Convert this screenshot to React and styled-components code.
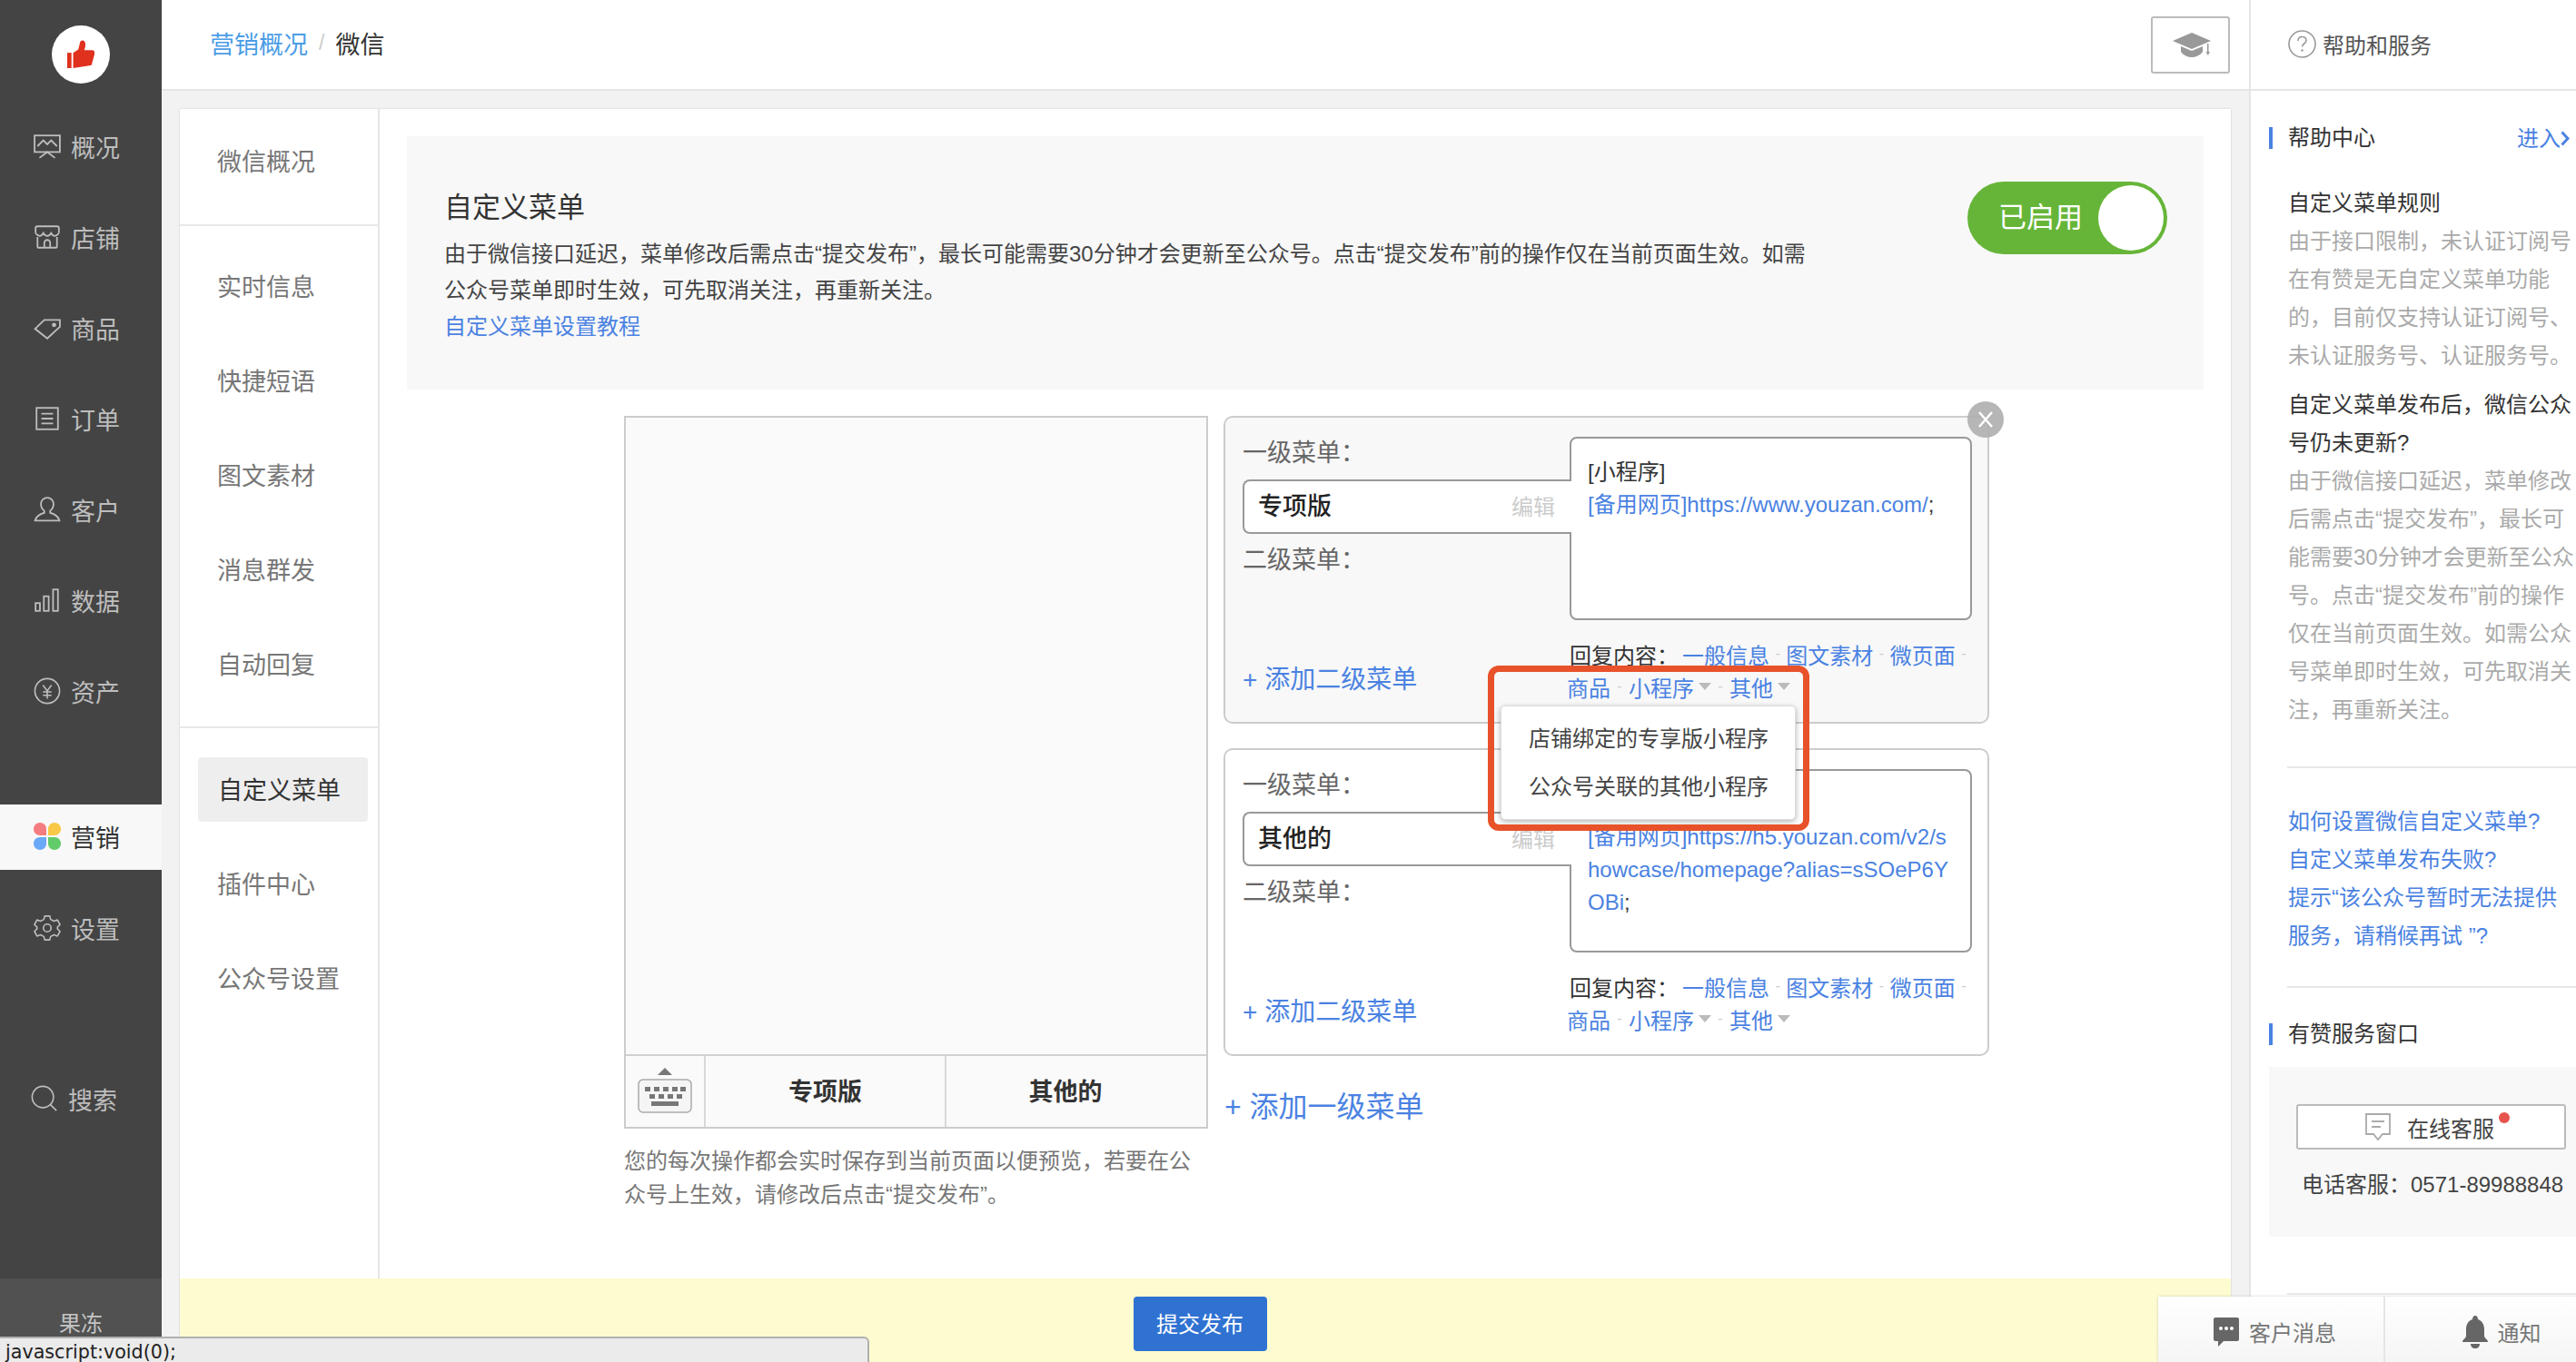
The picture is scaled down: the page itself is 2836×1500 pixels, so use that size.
import styled, { createGlobalStyle } from "styled-components";

const GlobalStyle = createGlobalStyle`
  html, body {
    margin: 0;
    padding: 0;
    background: #f2f2f2;
    overflow: hidden;
  }
  body, button {
    font-family: "Liberation Sans", "Noto Sans CJK SC", sans-serif;
    font-size: 24px;
    color: #333;
  }
`;

const BLUE = "#4a82e2";

const Page = styled.div`
  position: relative;
  display: flex;
  width: 2836px;
  height: 1500px;
  overflow: hidden;
`;

/* left dark column */
const Sidebar = styled.nav`
  flex: 0 0 178px;
  display: flex;
  flex-direction: column;
  background: #444;
`;

const LogoWrap = styled.div`
  height: 111px;
  display: flex;
  justify-content: center;
  padding-top: 28px;
  box-sizing: border-box;
`;

const Logo = styled.div`
  width: 64px;
  height: 64px;
  border-radius: 50%;
  background: #fff;
  display: flex;
  align-items: center;
  justify-content: center;
`;

const NavItem = styled.a`
  height: ${(p) => (p.$active ? "72px" : "100px")};
  margin: ${(p) => (p.$active ? "75px 0 14px" : "0")};
  margin-top: ${(p) => p.$top};
  padding-bottom: ${(p) => (p.$active ? "2px" : "0")};
  box-sizing: border-box;
  display: flex;
  align-items: center;
  gap: 11px;
  padding-left: ${(p) => p.$left || "37px"};
  font-size: 27px;
  color: ${(p) => (p.$active ? "#333" : "#bdbdbd")};
  background: ${(p) => (p.$active ? "#f8f8f8" : "transparent")};
`;

const NavIcon = styled.svg`
  width: 30px;
  height: 30px;
  flex: none;
  fill: none;
  stroke: #bdbdbd;
  stroke-width: 1.7;
`;

const SideFoot = styled.div`
  margin-top: auto;
  height: 92px;
  box-sizing: border-box;
  padding-top: 38px;
  background: #515151;
  color: #c4c4c4;
  text-align: center;
  line-height: 24px;
`;

/* middle column */
const Center = styled.div`
  flex: 1;
  min-width: 0;
  display: flex;
  flex-direction: column;
`;

const TopBar = styled.header`
  height: 100px;
  flex: none;
  box-sizing: border-box;
  border-bottom: 2px solid #e5e5e5;
  background: #fff;
  display: flex;
  align-items: center;
  justify-content: space-between;
  padding: 0 21px 0 53px;
`;

const Crumbs = styled.div`
  display: flex;
  align-items: center;
  padding-bottom: 4px;
  font-size: 27px;
`;

const CrumbLink = styled.a`
  color: #4a9de6;
`;

const CrumbSep = styled.span`
  color: #ccc;
  font-size: 23px;
  margin: 0 12px;
`;

const CapButton = styled.button`
  width: 87px;
  height: 63px;
  padding: 0 0 0 4px;
  background: #fff;
  border: 2px solid #bbb;
  border-radius: 3px;
  display: flex;
  align-items: center;
  justify-content: center;
`;

const Body = styled.div`
  flex: 1;
  min-height: 0;
  padding: 20px 20px 0;
  background: #f2f2f2;
  display: flex;
`;

const Panel = styled.div`
  flex: 1;
  min-width: 0;
  background: #fff;
  box-shadow: 0 0 2px rgba(0, 0, 0, 0.18);
  display: flex;
  flex-direction: column;
`;

const PanelMain = styled.div`
  flex: 1;
  min-height: 0;
  display: flex;
`;

const SubNav = styled.aside`
  flex: 0 0 220px;
  box-sizing: border-box;
  border-right: 2px solid #e5e5e5;
`;

const SubGroup = styled.div`
  padding: ${(p) => p.$pad};
  border-bottom: ${(p) => (p.$last ? "none" : "2px solid #e8e8e8")};
`;

const SubItem = styled.a`
  height: 104px;
  display: flex;
  align-items: center;
  padding: 0 0 3px 41px;
  box-sizing: border-box;
  font-size: 27px;
  color: #777;
`;

const SubActive = styled.a`
  display: flex;
  align-items: center;
  height: 71px;
  margin: 32px 11px 17px 20px;
  padding: 0 0 3px 22px;
  box-sizing: border-box;
  border-radius: 4px;
  background: #eee;
  font-size: 27px;
  color: #333;
`;

const Content = styled.main`
  flex: 1;
  min-width: 0;
  padding: 30px 30px 0;
`;

const Hero = styled.section`
  height: 279px;
  box-sizing: border-box;
  padding: 50px 40px 0 41px;
  background: #f8f8f8;
  display: flex;
  justify-content: space-between;
`;

const HeroTitle = styled.h2`
  margin: 9px 0 11px;
  font-size: 31px;
  font-weight: 400;
  line-height: 40px;
  color: #333;
`;

const HeroText = styled.p`
  margin: 0;
  line-height: 40px;
  white-space: nowrap;
  color: #444;
`;

const BlueLink = styled.a`
  color: ${BLUE};
`;

const Toggle = styled.div`
  width: 220px;
  height: 80px;
  box-sizing: border-box;
  padding: 0 4px 0 34px;
  border-radius: 40px;
  background: #66b538;
  color: #fff;
  font-size: 31px;
  line-height: 76px;
  display: flex;
  align-items: center;
  justify-content: space-between;
`;

const Knob = styled.span`
  width: 72px;
  height: 72px;
  border-radius: 50%;
  background: #fff;
`;

const Editor = styled.div`
  display: flex;
  align-items: flex-start;
  gap: 17px;
  margin: 29px 0 0 239px;
`;

const PhoneCol = styled.div`
  flex: 0 0 643px;
`;

const Phone = styled.div`
  height: 785px;
  box-sizing: border-box;
  border: 2px solid #ccc;
  background: #fafafa;
  display: flex;
  flex-direction: column;
`;

const PhoneScreen = styled.div`
  flex: 1;
`;

const PhoneFooter = styled.div`
  height: 80px;
  flex: none;
  box-sizing: border-box;
  border-top: 2px solid #d0d0d0;
  display: grid;
  grid-template-columns: 86px 265px 1fr;
`;

const PhoneCell = styled.div`
  display: flex;
  align-items: center;
  justify-content: center;
  padding: 0 ${(p) => p.$right || "0"} 3px 0;
  font-size: 27px;
  font-weight: 700;
  color: #333;
  border-left: ${(p) => (p.$first ? "none" : "2px solid #d8d8d8")};
`;

const PhoneNote = styled.p`
  margin: 18px 0 0;
  line-height: 36.5px;
  white-space: nowrap;
  color: #777;
`;

const CardsCol = styled.div`
  flex: 0 0 843px;
  display: flex;
  flex-direction: column;
  gap: 27px;
`;

const Card = styled.div`
  position: relative;
  z-index: ${(p) => (p.$on ? 2 : 1)};
  height: 339px;
  box-sizing: border-box;
  padding: 21px 0 0 19px;
  border: 2px solid #ccc;
  border-radius: 10px;
  background: ${(p) => (p.$on ? "#f8f8f8" : "#fff")};
  display: grid;
  grid-template-columns: 360px 443px;
  align-content: start;
`;

const CloseBadge = styled.span`
  position: absolute;
  top: -18px;
  right: -18px;
  width: 40px;
  height: 40px;
  border-radius: 50%;
  background: rgba(176, 176, 176, 0.92);
  display: flex;
  align-items: center;
  justify-content: center;
`;

const FormCol = styled.div`
  display: flex;
  flex-direction: column;
`;

const FieldLabel = styled.div`
  height: 36px;
  line-height: 36px;
  font-size: 27px;
  color: #666;
  margin-bottom: ${(p) => p.$bottom || "0"};
  margin-top: ${(p) => p.$top || "0"};
`;

const NameInput = styled.div`
  position: relative;
  z-index: 1;
  width: calc(100% + 2px);
  height: 60px;
  box-sizing: border-box;
  padding: 0 18px 5px 15px;
  border: 2px solid #999;
  border-right: none;
  border-radius: 8px 0 0 8px;
  background: #fff;
  display: flex;
  align-items: center;
  justify-content: space-between;
`;

const NameText = styled.span`
  font-size: 27px;
  font-weight: 500;
  color: #222;
`;

const EditText = styled.span`
  padding-top: 2px;
  color: #ccc;
`;

const AddSub = styled.a`
  margin-top: 94px;
  line-height: 40px;
  font-size: 28px;
  color: ${BLUE};
`;

const ReplyCol = styled.div`
  display: flex;
  flex-direction: column;
`;

const ReplyBox = styled.div`
  height: 202px;
  box-sizing: border-box;
  padding: 19px 16px 0 18px;
  border: 2px solid #999;
  border-radius: 8px;
  background: #fff;
  line-height: 36px;
  word-break: break-all;
`;

const ReplyLine = styled.div`
  display: flex;
  align-items: center;
  height: 36px;
  white-space: nowrap;
  margin-left: ${(p) => p.$left || "0"};
  margin-top: ${(p) => p.$top || "0"};
`;

const ReplyLabel = styled.span`
  margin-right: 4px;
`;

const Dash = styled.span`
  width: 20px;
  text-align: center;
  font-size: 16px;
  color: #ccc;
`;

const Caret = styled.i`
  width: 0;
  height: 0;
  margin-left: 5px;
  border-left: 7px solid transparent;
  border-right: 7px solid transparent;
  border-top: 8px solid #bbb;
`;

const Dropdown = styled.div`
  position: absolute;
  z-index: 3;
  top: 317px;
  left: 303px;
  width: 325px;
  height: 126px;
  box-sizing: border-box;
  padding-top: 9px;
  border: 1px solid #ddd;
  border-radius: 5px;
  background: #fff;
  box-shadow: 0 2px 6px rgba(0, 0, 0, 0.3);
`;

const DropItem = styled.div`
  height: 53px;
  line-height: 53px;
  padding-left: 30px;
  white-space: nowrap;
  color: #444;
`;

const RedMark = styled.div`
  position: absolute;
  z-index: 4;
  top: 273px;
  left: 289px;
  width: 354px;
  height: 182px;
  box-sizing: border-box;
  border: 7px solid #e8522a;
  border-radius: 12px;
  pointer-events: none;
`;

const AddTop = styled.a`
  margin-top: 7px;
  margin-left: 1px;
  line-height: 44px;
  font-size: 32px;
  color: ${BLUE};
`;

const SubmitBar = styled.div`
  height: 92px;
  flex: none;
  box-sizing: border-box;
  padding: 20px 12px 0 0;
  background: #fdfbd0;
  display: flex;
  justify-content: center;
`;

const SubmitButton = styled.button`
  width: 147px;
  height: 60px;
  padding: 0 0 3px;
  border: none;
  border-radius: 4px;
  background: #2f72d2;
  color: #fff;
`;

/* right help column */
const Help = styled.aside`
  flex: 0 0 360px;
  box-sizing: border-box;
  border-left: 2px solid #e5e5e5;
  background: #fff;
  overflow: hidden;
`;

const HelpTop = styled.div`
  height: 100px;
  box-sizing: border-box;
  border-bottom: 2px solid #e5e5e5;
  padding: 0 0 2px 41px;
  display: flex;
  align-items: center;
  gap: 7px;
  color: #555;
`;

const SectionHead = styled.div`
  display: flex;
  justify-content: space-between;
  height: 24px;
  line-height: 23px;
  margin: ${(p) => p.$margin};
  padding: 0 7px 0 17px;
  border-left: 4px solid #4a82e2;
`;

const SectionLink = styled.a`
  display: flex;
  align-items: center;
  color: ${BLUE};
`;

const HelpBlock = styled.div`
  padding-left: 41px;
  width: 317px;
  margin-top: ${(p) => p.$top || "0"};
  line-height: 42px;
`;

const HelpTitle = styled.div`
  color: #333;
  margin-top: ${(p) => p.$top || "0"};
`;

const HelpText = styled.div`
  color: #aaa;
`;

const HelpLink = styled.a`
  display: block;
  color: ${BLUE};
`;

const HelpRule = styled.div`
  height: 2px;
  margin: ${(p) => p.$margin};
  margin-left: 40px;
  background: #e8e8e8;
`;

const ServiceBox = styled.div`
  height: 187px;
  box-sizing: border-box;
  margin: 24px 0 0 20px;
  padding: 41px 0 0 30px;
  background: #f8f8f8;
`;

const ServiceButton = styled.div`
  width: 297px;
  height: 50px;
  box-sizing: border-box;
  padding-left: 73px;
  border: 2px solid #bbb;
  border-radius: 3px;
  background: #fff;
  display: flex;
  align-items: center;
  gap: 17px;
`;

const ServiceLabel = styled.span`
  position: relative;
  color: #444;
`;

const RedDot = styled.i`
  position: absolute;
  top: 1px;
  right: -17px;
  width: 12px;
  height: 12px;
  border-radius: 50%;
  background: #e8534e;
`;

const PhoneLine = styled.div`
  margin: 23px 0 0 6px;
  line-height: 32px;
  white-space: nowrap;
  color: #444;
`;

/* things that float over the page */
const BottomTabs = styled.div`
  position: absolute;
  z-index: 6;
  right: 0;
  bottom: 0;
  width: 460px;
  height: 72px;
  background: linear-gradient(#fff, #f5f5f5);
  box-shadow: 0 0 3px rgba(0, 0, 0, 0.18);
  display: grid;
  grid-template-columns: 250px 1fr;
`;

const BottomTab = styled.div`
  display: flex;
  align-items: center;
  justify-content: center;
  gap: 11px;
  padding: 5px 0 0 ${(p) => p.$shift};
  box-sizing: border-box;
  color: #777;
  border-right: ${(p) => (p.$divider ? "2px solid #e5e5e5" : "none")};
`;

const StatusBar = styled.div`
  position: absolute;
  z-index: 7;
  left: 0;
  bottom: 0;
  width: 957px;
  height: 28px;
  box-sizing: border-box;
  padding-left: 6px;
  border-top: 2px solid #b0b0b0;
  border-right: 2px solid #b0b0b0;
  border-top-right-radius: 6px;
  background: #ebebeb;
  font-family: "DejaVu Sans", sans-serif;
  font-size: 20.7px;
  line-height: 30px;
  color: #222;
`;

const ThumbLogo = () => (
  <svg width="30" height="34" viewBox="0 0 32 34" fill="#e0301e">
    <rect x="0" y="15" width="5" height="18" />
    <path d="M7 15 13 11 15 3C15 0 20-1 21 3 22 6 21 9 20 12H29C32 12 33 15 32 17L29 28C29 30 27 30 26 30L7 33Z" />
  </svg>
);

const OverviewIcon = () => (
  <NavIcon viewBox="0 0 28 28">
    <rect x="1" y="3" width="26" height="17" />
    <path d="M4 14 10 8 14 12 18 8 24 14M6 26 14 20 22 26" />
  </NavIcon>
);

const ShopIcon = () => (
  <NavIcon viewBox="0 0 28 28">
    <path d="M2 10V5a2 2 0 0 1 2-2h20a2 2 0 0 1 2 2v5" />
    <path d="M2 10c3 4 6 4 8 0 2 4 6 4 8 0 2 4 5 4 8 0" />
    <path d="M4 14v10a1 1 0 0 0 1 1h18a1 1 0 0 0 1-1V14M11 25v-5a3 3 0 0 1 6 0v5" />
  </NavIcon>
);

const TagIcon = () => (
  <NavIcon viewBox="0 0 28 28">
    <path d="M1.500 15 11 6H27V13L14 25Z" />
    <circle cx="21" cy="11" r="1.400" fill="#bdbdbd" />
  </NavIcon>
);

const OrderIcon = () => (
  <NavIcon viewBox="0 0 28 28">
    <rect x="3" y="3" width="22" height="22" />
    <path d="M8 9H20M8 14H20M8 19H20" />
  </NavIcon>
);

const UserIcon = () => (
  <NavIcon viewBox="0 0 28 28">
    <path d="M14 2a6.500 6.500 0 0 1 6.500 6.500c0 3-1.500 5.500-3.500 7v2c4 1 8 3 9.500 8H1.500C3 20.500 7 18.500 11 17.500v-2C9 14 7.500 11.500 7.500 8.500A6.500 6.500 0 0 1 14 2Z" />
  </NavIcon>
);

const ChartIcon = () => (
  <NavIcon viewBox="0 0 28 28">
    <rect x="2" y="17" width="4.500" height="8" />
    <rect x="10.500" y="10" width="5" height="15" />
    <rect x="20" y="3" width="5" height="22" />
  </NavIcon>
);

const YenIcon = () => (
  <NavIcon viewBox="0 0 32 32">
    <circle cx="16" cy="16" r="14.500" />
    <path d="M11 9 16 16 21 9M16 16V25M11 17H21M11 21H21" />
  </NavIcon>
);

const PetalIcon = () => (
  <svg width="30" height="30" viewBox="0 0 30 30">
    <path fill="#f47c80" d="M14 14H7C3 14 0 11 0 7S3 0 7 0 14 3 14 7Z" />
    <path fill="#f9c846" d="M16 14H23C27 14 30 11 30 7S27 0 23 0 16 3 16 7Z" />
    <path fill="#6aa9f7" d="M14 16H7C3 16 0 19 0 23S3 30 7 30 14 27 14 23Z" />
    <path fill="#62cb6a" d="M16 16H23C27 16 30 19 30 23S27 30 23 30 16 27 16 23Z" />
  </svg>
);

const GearIcon = () => (
  <NavIcon viewBox="0 0 32 32">
    <circle cx="16" cy="16" r="4.500" />
    <path d="M13 2H19L20 6 24 8 28 6.500 31 12 28 15V17L31 20 28 25.500 24 24 20 26 19 30H13L12 26 8 24 4 25.500 1 20 4 17V15L1 12 4 6.500 8 8 12 6Z" strokeLinejoin="round" />
  </NavIcon>
);

const SearchIcon = () => (
  <NavIcon viewBox="0 0 32 32">
    <circle cx="14" cy="14" r="12.500" />
    <path d="M23 23 30 30" />
  </NavIcon>
);

const CapIcon = () => (
  <svg width="43" height="27" viewBox="0 0 43 27" fill="#999">
    <path d="M21 0 42 9 21 18 0 9Z" />
    <path d="M9 15 21 20 33 15V21C30 25 25 27 21 27S12 25 9 21Z" />
    <path d="M38 12H39.500V21H41L38.800 25 36.500 21H38Z" />
  </svg>
);

const CrossIcon = () => (
  <svg width="20" height="20" viewBox="0 0 20 20" stroke="#fff" strokeWidth="2.500">
    <path d="M3 2 17 18M17 2 3 18" />
  </svg>
);

const KeyboardIcon = () => (
  <svg width="60" height="50" viewBox="0 0 60 50">
    <path fill="#777" d="M30 0 38 8H22Z" />
    <rect x="1" y="13" width="58" height="36" rx="5" fill="#f5f5f5" stroke="#aaa" strokeWidth="1.500" />
    {[8, 18, 28, 38, 47].map((x) => (
      <rect key={x} x={x} y="21" width="6" height="5" fill="#777" />
    ))}
    {[13, 23, 33, 43].map((x) => (
      <rect key={x} x={x} y="29" width="6" height="5" fill="#777" />
    ))}
    <rect x="15" y="37" width="30" height="5" fill="#777" />
  </svg>
);

const QuestionIcon = () => (
  <svg width="31" height="31" viewBox="0 0 31 31" fill="none">
    <circle cx="15.500" cy="15.500" r="14.500" stroke="#999" strokeWidth="1.600" />
    <path d="M11 12c0-3 2-4.500 4.500-4.500S20 9 20 11.500c0 3.500-4.500 3.500-4.500 7" stroke="#999" strokeWidth="1.600" />
    <circle cx="15.500" cy="22.500" r="1.200" fill="#999" />
  </svg>
);

const ChevronIcon = () => (
  <svg width="10" height="17" viewBox="0 0 10 17" fill="none" stroke={BLUE} strokeWidth="3">
    <path d="M1.500 1.500 8 8.500 1.500 15.500" />
  </svg>
);

const ServiceIcon = () => (
  <svg width="30" height="32" viewBox="0 0 30 32" fill="none" stroke="#aaa" strokeWidth="1.800">
    <path d="M2 2H28V24H20L15 30 10 24H2Z" />
    <path d="M8 10H22M8 16H18" />
  </svg>
);

const ChatIcon = () => (
  <svg width="28" height="32" viewBox="0 0 28 32">
    <path fill="#666" d="M2 0H26A2 2 0 0 1 28 2V24A2 2 0 0 1 26 26H11L5 32V26H2A2 2 0 0 1 0 24V2A2 2 0 0 1 2 0Z" />
    <circle cx="8" cy="12" r="2" fill="#fff" />
    <circle cx="14" cy="12" r="2" fill="#fff" />
    <circle cx="20" cy="12" r="2" fill="#fff" />
  </svg>
);

const BellIcon = () => (
  <svg width="28" height="36" viewBox="0 0 28 36" fill="#666">
    <path d="M14 0C16 0 17 2 17 4 22 6 24 10 24 15V22C24 25 28 26 28 29H0C0 26 4 25 4 22V15C4 10 6 6 11 4 11 2 12 0 14 0Z" />
    <path d="M9 31H19C19 34 17 36 14 36S9 34 9 31Z" />
  </svg>
);

const mainNav = [
  ["概况", OverviewIcon],
  ["店铺", ShopIcon],
  ["商品", TagIcon],
  ["订单", OrderIcon],
  ["客户", UserIcon],
  ["数据", ChartIcon],
  ["资产", YenIcon],
];

function ReplyLinks({ top }) {
  return (
    <>
      <ReplyLine $top={top}>
        <ReplyLabel>回复内容：</ReplyLabel>
        <BlueLink>一般信息</BlueLink>
        <Dash>-</Dash>
        <BlueLink>图文素材</BlueLink>
        <Dash>-</Dash>
        <BlueLink>微页面</BlueLink>
        <Dash>-</Dash>
      </ReplyLine>
      <ReplyLine $left="-3px">
        <BlueLink>商品</BlueLink>
        <Dash>-</Dash>
        <BlueLink>小程序</BlueLink>
        <Caret />
        <Dash>-</Dash>
        <BlueLink>其他</BlueLink>
        <Caret />
      </ReplyLine>
    </>
  );
}

function MenuCard({ name, on, children, extra }) {
  return (
    <Card $on={on}>
      <FormCol>
        <FieldLabel $bottom="11px">一级菜单：</FieldLabel>
        <NameInput>
          <NameText>{name}</NameText>
          <EditText>编辑</EditText>
        </NameInput>
        <FieldLabel $top="11px">二级菜单：</FieldLabel>
        <AddSub>+ 添加二级菜单</AddSub>
      </FormCol>
      <ReplyCol>
        <ReplyBox>{children}</ReplyBox>
        <ReplyLinks top="19px" />
      </ReplyCol>
      {extra}
    </Card>
  );
}

export default function App() {
  return (
    <Page>
      <GlobalStyle />
      <Sidebar>
        <LogoWrap>
          <Logo>
            <ThumbLogo />
          </Logo>
        </LogoWrap>
        {mainNav.map(([label, Icon]) => (
          <NavItem key={label}>
            <Icon />
            {label}
          </NavItem>
        ))}
        <NavItem $active>
          <PetalIcon />
          营销
        </NavItem>
        <NavItem>
          <GearIcon />
          设置
        </NavItem>
        <NavItem $top="88px" $left="34px">
          <SearchIcon />
          搜索
        </NavItem>
        <SideFoot>果冻</SideFoot>
      </Sidebar>

      <Center>
        <TopBar>
          <Crumbs>
            <CrumbLink>营销概况</CrumbLink>
            <CrumbSep>/</CrumbSep>
            微信
          </Crumbs>
          <CapButton>
            <CapIcon />
          </CapButton>
        </TopBar>
        <Body>
          <Panel>
            <PanelMain>
              <SubNav>
                <SubGroup $pad="6px 0 17px">
                  <SubItem>微信概况</SubItem>
                </SubGroup>
                <SubGroup $pad="15px 0 16px">
                  <SubItem>实时信息</SubItem>
                  <SubItem>快捷短语</SubItem>
                  <SubItem>图文素材</SubItem>
                  <SubItem>消息群发</SubItem>
                  <SubItem>自动回复</SubItem>
                </SubGroup>
                <SubGroup $last>
                  <SubActive>自定义菜单</SubActive>
                  <SubItem>插件中心</SubItem>
                  <SubItem>公众号设置</SubItem>
                </SubGroup>
              </SubNav>
              <Content>
                <Hero>
                  <div>
                    <HeroTitle>自定义菜单</HeroTitle>
                    <HeroText>
                      由于微信接口延迟，菜单修改后需点击“提交发布”，最长可能需要30分钟才会更新至公众号。点击“提交发布”前的操作仅在当前页面生效。如需
                      <br />
                      公众号菜单即时生效，可先取消关注，再重新关注。
                      <br />
                      <BlueLink>自定义菜单设置教程</BlueLink>
                    </HeroText>
                  </div>
                  <Toggle>
                    已启用
                    <Knob />
                  </Toggle>
                </Hero>
                <Editor>
                  <PhoneCol>
                    <Phone>
                      <PhoneScreen />
                      <PhoneFooter>
                        <PhoneCell $first>
                          <KeyboardIcon />
                        </PhoneCell>
                        <PhoneCell>专项版</PhoneCell>
                        <PhoneCell $right="24px">其他的</PhoneCell>
                      </PhoneFooter>
                    </Phone>
                    <PhoneNote>
                      您的每次操作都会实时保存到当前页面以便预览，若要在公
                      <br />
                      众号上生效，请修改后点击“提交发布”。
                    </PhoneNote>
                  </PhoneCol>
                  <CardsCol>
                    <MenuCard
                      name="专项版"
                      on
                      extra={
                        <>
                          <CloseBadge>
                            <CrossIcon />
                          </CloseBadge>
                          <Dropdown>
                            <DropItem>店铺绑定的专享版小程序</DropItem>
                            <DropItem>公众号关联的其他小程序</DropItem>
                          </Dropdown>
                          <RedMark />
                        </>
                      }
                    >
                      [小程序]
                      <br />
                      <BlueLink>[备用网页]https://www.youzan.com/</BlueLink>;
                    </MenuCard>
                    <MenuCard name="其他的">
                      <br />
                      <BlueLink>[备用网页]https://h5.youzan.com/v2/showcase/homepage?alias=sSOeP6YOBi</BlueLink>;
                    </MenuCard>
                    <AddTop>+ 添加一级菜单</AddTop>
                  </CardsCol>
                </Editor>
              </Content>
            </PanelMain>
            <SubmitBar>
              <SubmitButton>提交发布</SubmitButton>
            </SubmitBar>
          </Panel>
        </Body>
      </Center>

      <Help>
        <HelpTop>
          <QuestionIcon />
          帮助和服务
        </HelpTop>
        <SectionHead $margin="40px 0 0 20px">
          帮助中心
          <SectionLink>
            进入
            <ChevronIcon />
          </SectionLink>
        </SectionHead>
        <HelpBlock $top="39px">
          <HelpTitle>自定义菜单规则</HelpTitle>
          <HelpText>由于接口限制，未认证订阅号在有赞是无自定义菜单功能的，目前仅支持认证订阅号、未认证服务号、认证服务号。</HelpText>
          <HelpTitle $top="12px">自定义菜单发布后，微信公众号仍未更新?</HelpTitle>
          <HelpText>由于微信接口延迟，菜单修改后需点击“提交发布”，最长可能需要30分钟才会更新至公众号。点击“提交发布”前的操作仅在当前页面生效。如需公众号菜单即时生效，可先取消关注，再重新关注。</HelpText>
        </HelpBlock>
        <HelpRule $margin="41px 0 0" />
        <HelpBlock $top="38px">
          <HelpLink>如何设置微信自定义菜单?</HelpLink>
          <HelpLink>自定义菜单发布失败?</HelpLink>
          <HelpLink>
            提示“该公众号暂时无法提供
            <br />
            服务，请稍候再试 ”?
          </HelpLink>
        </HelpBlock>
        <HelpRule $margin="34px 0 0" />
        <SectionHead $margin="39px 0 0 20px">有赞服务窗口</SectionHead>
        <ServiceBox>
          <ServiceButton>
            <ServiceIcon />
            <ServiceLabel>
              在线客服
              <RedDot />
            </ServiceLabel>
          </ServiceButton>
          <PhoneLine>电话客服：0571-89988848</PhoneLine>
        </ServiceBox>
        <HelpRule $margin="62px 0 0" />
      </Help>

      <BottomTabs>
        <BottomTab $divider $shift="9px">
          <ChatIcon />
          客户消息
        </BottomTab>
        <BottomTab $shift="46px">
          <BellIcon />
          通知
        </BottomTab>
      </BottomTabs>
      <StatusBar>javascript:void(0);</StatusBar>
    </Page>
  );
}
